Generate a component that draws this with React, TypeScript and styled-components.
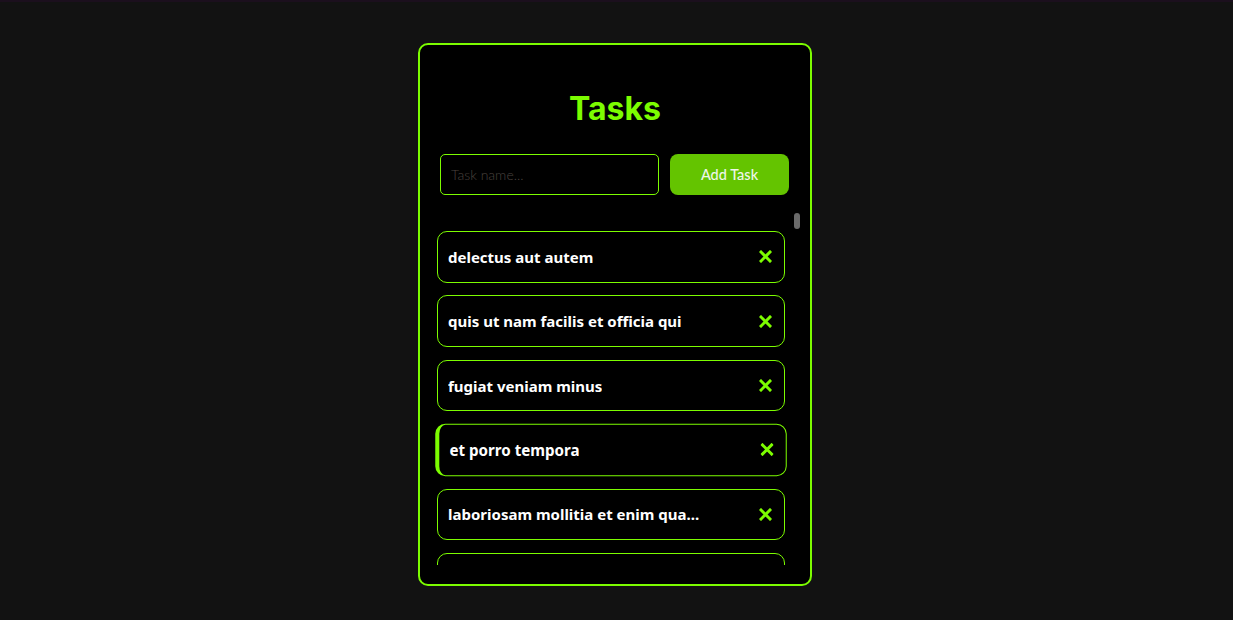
import React, { useEffect, useRef, useState } from "react";
import styled, { createGlobalStyle } from "styled-components";

// 목록 데이터 (jsonplaceholder todos 모양)
const baseTitles = [
  "delectus aut autem",
  "quis ut nam facilis et officia qui",
  "fugiat veniam minus",
  "et porro tempora",
  "laboriosam mollitia et enim quasi adipisci quia provident illum",
  "qui ullam ratione quibusdam voluptatem quia omnis",
  "illo expedita consequatur quia in",
  "quo adipisci enim quam ut ab",
  "molestiae perspiciatis ipsa",
  "illo est ratione doloremque quia maiores aut",
  "vero rerum temporibus dolor",
  "ipsa repellendus fugit nisi",
  "et doloremque nulla",
  "repellendus sunt dolores architecto voluptatum",
  "ab voluptatum amet voluptas",
  "accusamus eos facilis sint et aut voluptatem",
  "quo laboriosam deleniti aut qui",
  "dolorum est consequatur ea mollitia in culpa",
  "molestiae ipsa aut voluptatibus pariatur dolor nihil",
  "ullam nobis libero sapiente ad optio sint",
];

const initialTasks = Array.from({ length: 120 }, (_, i) => ({
  id: i + 1,
  title: baseTitles[i % baseTitles.length],
}));

// 긴 제목 자르기
const shorten = (text: string) => (text.length > 34 ? text.slice(0, 31) + "..." : text);

const CloseIcon: React.FC = () => (
  <svg width="13" height="13" viewBox="0 0 13 13" fill="none">
    <path d="M2 2L11 11M11 2L2 11" stroke="#7cfc00" strokeWidth="3" strokeLinecap="square" />
  </svg>
);

const App: React.FC = () => {
  const [tasks, setTasks] = useState(initialTasks);
  const [name, setName] = useState<string>("");
  const [thumb, setThumb] = useState({ top: 0, height: 16 });
  const boxRef = useRef<HTMLDivElement>(null);

  // 스크롤 위치에 따라 thumb 계산
  const updateThumb = () => {
    const el = boxRef.current;
    if (!el) return;
    const ratio = el.clientHeight / el.scrollHeight;
    const height = Math.max(16, el.clientHeight * ratio);
    const max = el.scrollHeight - el.clientHeight;
    const top = max > 0 ? (el.scrollTop / max) * (el.clientHeight - height) : 0;
    setThumb({ top, height });
  };

  useEffect(() => {
    updateThumb();
  }, [tasks]);

  const handleAdd = () => {
    if (!name.trim()) return;
    setTasks([{ id: Date.now(), title: name.trim() }, ...tasks]);
    setName("");
  };

  const handleRemove = (id: number) => setTasks(tasks.filter((t) => t.id !== id));

  return (
    <Page>
      <GlobalStyle />
      <Card>
        <Title>Tasks</Title>
        <Form
          onSubmit={(e) => {
            e.preventDefault();
            handleAdd();
          }}
        >
          <TaskInput
            placeholder="Task name..."
            value={name}
            onChange={(e) => setName(e.target.value)}
          />
          <AddButton type="submit">Add Task</AddButton>
        </Form>
        <ListArea>
          <ScrollBox ref={boxRef} onScroll={updateThumb}>
            {tasks.map((task, index) => (
              <TaskItem key={task.id} $active={index === 3}>
                <TaskText>{shorten(task.title)}</TaskText>
                <RemoveButton onClick={() => handleRemove(task.id)} aria-label="remove">
                  <CloseIcon />
                </RemoveButton>
              </TaskItem>
            ))}
          </ScrollBox>
          <ScrollTrack>
            <ScrollThumb style={{ marginTop: thumb.top, height: thumb.height }} />
          </ScrollTrack>
        </ListArea>
      </Card>
    </Page>
  );
};

export default App;

// Styled Components
const GlobalStyle = createGlobalStyle`
  * { box-sizing: border-box; }
  body {
    margin: 0;
    background-color: #121212;
    font-family: "Noto Sans", "Open Sans", sans-serif;
  }
`;

const Page = styled.div`
  display: flex;
  justify-content: center;
  min-height: 100vh;
  padding: 41px 3px 0 0;
  border-top: 2px solid #1b0f1d;
`;

const Card = styled.div`
  display: flex;
  flex-direction: column;
  width: 394px;
  height: 543px;
  padding: 20px 0 19px;
  background-color: #000;
  border: 2px solid #7cfc00;
  border-radius: 10px;
`;

const Title = styled.h1`
  margin: 20px 0 21px;
  height: 48px;
  line-height: 48px;
  text-align: center;
  font-family: "Inter", "Lato", sans-serif;
  font-size: 32px;
  font-weight: 700;
  color: #7cfc00;
`;

const Form = styled.form`
  display: flex;
  gap: 11px;
  padding: 0 20px;
  height: 41px;
`;

const TaskInput = styled.input`
  width: 219px;
  height: 41px;
  padding: 0 10px;
  background: #000;
  border: 1px solid #7cfc00;
  border-radius: 5px;
  color: #ddd;
  font-family: "Lato", sans-serif;
  font-weight: 300;
  font-size: 14px;
  outline: none;

  &::placeholder {
    color: #4a433f;
  }
`;

const AddButton = styled.button`
  width: 119px;
  height: 41px;
  border: none;
  border-radius: 8px;
  background-color: #64c400;
  color: #eef6e8;
  font-family: "Lato", sans-serif;
  font-size: 14.5px;
  font-weight: 500;
  cursor: pointer;
`;

const ListArea = styled.div`
  display: flex;
  height: 352px;
  margin: 18px 9px 0 17px;
`;

const ScrollBox = styled.div`
  flex: 1;
  padding: 18px 8px 0 2px;
  margin-left: -2px;
  overflow-y: auto;
  overflow-x: hidden;
  scrollbar-width: none;

  &::-webkit-scrollbar {
    display: none;
  }
`;

const ScrollTrack = styled.div`
  display: flex;
  flex-direction: column;
  width: 8px;
  padding: 0 1px;
`;

const ScrollThumb = styled.div`
  width: 6px;
  border-radius: 3px;
  background-color: #6a6a6a;
`;

const TaskItem = styled.div<{ $active?: boolean }>`
  display: flex;
  align-items: center;
  justify-content: space-between;
  height: 51.5px;
  margin-bottom: 12.9px;
  padding: 0 12px 0 10px;
  border: 1px solid #7cfc00;
  border-left-width: ${({ $active }) => ($active ? "4px" : "1px")};
  border-radius: 10px;
  transform: ${({ $active }) => ($active ? "scale(1.01)" : "none")};
`;

const TaskText = styled.span`
  color: #fff;
  font-family: "Noto Sans", sans-serif;
  font-size: 15px;
  font-weight: 700;
  white-space: nowrap;
  overflow: hidden;
`;

const RemoveButton = styled.button`
  display: flex;
  align-items: center;
  padding: 0;
  background: none;
  border: none;
  cursor: pointer;
`;
